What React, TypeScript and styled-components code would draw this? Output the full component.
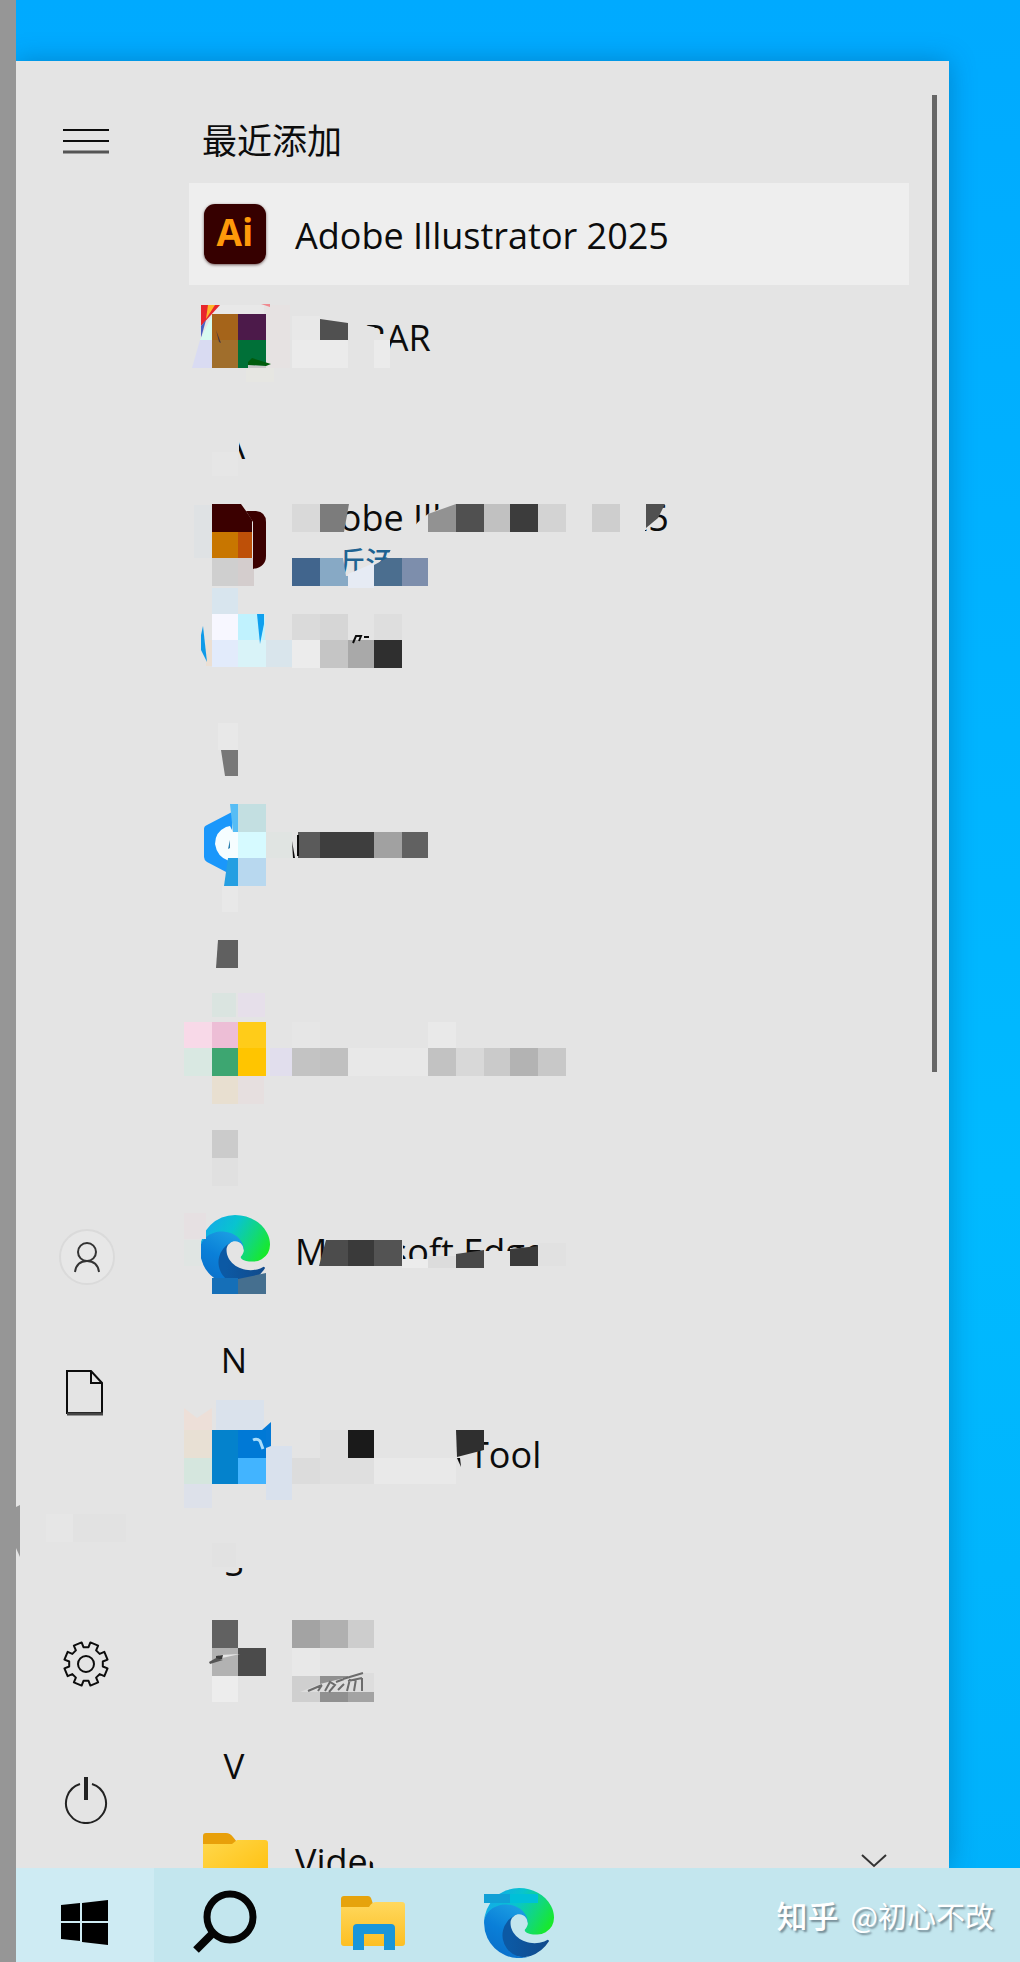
import React from "react";
import styled, { createGlobalStyle } from "styled-components";

const SURFACE = "#e4e4e4";
const INK = "#0c0c0c";

const GlobalStyle = createGlobalStyle`
  *, *::before, *::after { box-sizing: border-box; }
  body {
    margin: 0;
    color: ${INK};
    font-family: "Open Sans", "Noto Sans", "Noto Sans CJK SC", sans-serif;
  }
  svg { display: block; flex: none; }
`;

const Screen = styled.div`
  display: flex;
  background: linear-gradient(#00aaff, #00baff 60%, #00b0fb);
`;

const Edge = styled.div`
  position: relative;
  z-index: 1;
  flex: none;
  width: 16px;
  background: #969696;
`;

const Desktop = styled.div`
  flex: 1;
  min-width: 0;
  display: flex;
  flex-direction: column;
  padding-top: 61px;
`;

const StartMenu = styled.main`
  display: flex;
  margin-right: 71px;
  background: ${SURFACE};
  box-shadow: 0 0 24px rgba(0, 60, 110, 0.35);
`;

const Rail = styled.nav`
  position: relative;
  flex: none;
  width: 173px;
  padding: 12px 33px 0 0;
  display: flex;
  flex-direction: column;
  justify-content: space-between;
`;

const RailGroup = styled.div`
  display: flex;
  flex-direction: column;
`;

const RailButton = styled.button`
  display: flex;
  align-items: center;
  justify-content: center;
  height: 136px;
  padding: 0;
  border: 0;
  background: transparent;
  color: ${INK};
`;

const Notch = styled.svg`
  position: absolute;
  left: 0;
  bottom: 311px;
`;

const List = styled.section`
  flex: 1;
  min-width: 0;
`;

const Heading = styled.h2`
  margin: 0;
  height: 122px;
  padding: 53px 0 0 13px;
  font: 400 35px/50px "Noto Sans CJK SC", sans-serif;
`;

const Rows = styled.div`
  position: relative;
`;

const AppRow = styled.button<{ $active?: boolean; $cut?: boolean }>`
  display: flex;
  align-items: ${(p) => (p.$cut ? "flex-start" : "center")};
  gap: 26px;
  width: 100%;
  height: ${(p) => (p.$cut ? 60 : 102)}px;
  padding: ${(p) => (p.$cut ? "24px" : "0")} 12px 0;
  overflow: hidden;
  border: 0;
  background: ${(p) => (p.$active ? "#eeeeee" : "transparent")};
  color: inherit;
  font-family: inherit;
  text-align: left;
`;

const IconSlot = styled.span`
  flex: none;
  display: flex;
  align-items: center;
  justify-content: center;
  width: 68px;
`;

const Label = styled.span<{ $indent?: number; $cut?: boolean }>`
  flex: 1;
  padding-top: ${(p) => (p.$cut ? 8 : 4)}px;
  padding-left: ${(p) => p.$indent ?? 0}px;
  font-size: 36px;
  line-height: 44px;
  white-space: nowrap;
`;

const Sub = styled.span`
  display: block;
  color: #1f6391;
  font: 35px/46px "Noto Sans CJK SC", sans-serif;
`;

const LetterRow = styled.button`
  display: block;
  width: 100%;
  height: 101px;
  padding: 16px 28px 0;
  border: 0;
  background: transparent;
  color: inherit;
  font: 400 35px/44px "Open Sans", sans-serif;
  text-align: left;
`;

const Letter = styled.span`
  display: block;
  width: 34px;
  text-align: center;
`;

const MosaicLayer = styled.svg`
  position: absolute;
  left: 0;
  top: 0;
  width: 720px;
  height: 1685px;
  overflow: visible;
  pointer-events: none;
`;

const Gutter = styled.div`
  flex: none;
  width: 40px;
  padding: 34px 12px 0 23px;
`;

const Thumb = styled.div`
  height: 977px;
  background: #666666;
`;

const Taskbar = styled.footer`
  position: relative;
  display: flex;
  align-items: stretch;
  height: 94px;
  background: #c3e6ee;
`;

const TaskButton = styled.button<{ $start?: boolean }>`
  flex: none;
  display: flex;
  align-items: center;
  justify-content: center;
  width: ${(p) => (p.$start ? 138 : 146)}px;
  padding: 16px 0 0;
  border: 0;
  background: ${(p) => (p.$start ? "#ceebf3" : "transparent")};
`;

const Credit = styled.p`
  display: flex;
  align-items: center;
  gap: 12px;
  margin: 0 26px 0 auto;
  color: #ffffff;
  font: 400 29px/40px "Noto Sans CJK SC", sans-serif;
  text-shadow: 2px 2px 2px rgba(90, 110, 120, 0.75);
`;

const Site = styled.strong`
  font-size: 31px;
  font-weight: 500;
`;

function EdgeLogo({ id, size }: { id: string; size: number }) {
  return (
    <svg width={size} height={size} viewBox="0 0 256 256" aria-hidden="true">
      <defs>
        <linearGradient id={id + "a"} x1="0.2" x2="1" y1="0.6" y2="0.6">
          <stop offset="0" stopColor="#0c59a4" />
          <stop offset="1" stopColor="#114a8b" />
        </linearGradient>
        <linearGradient id={id + "b"} x1="0.7" x2="0.3" y1="0.1" y2="1">
          <stop offset="0" stopColor="#1b9de2" />
          <stop offset="0.5" stopColor="#0a7fd8" />
          <stop offset="1" stopColor="#0a6fc9" />
        </linearGradient>
        <linearGradient id={id + "c"} x1="0" x2="1" y1="0.3" y2="0.7">
          <stop offset="0" stopColor="#14a8ea" />
          <stop offset="0.4" stopColor="#08c4cf" />
          <stop offset="0.72" stopColor="#12d87a" />
          <stop offset="1" stopColor="#18ea28" />
        </linearGradient>
      </defs>
      <path fill={`url(#${id}a)`} d="M231 190.5c-3.4 1.8-6.9 3.4-10.5 4.7a101.5 101.5 0 0 1-35.6 6.4c-47 0-87.9-32.3-87.9-73.8a31.5 31.5 0 0 1 16.4-27.3c-42.5 1.8-53.4 46.1-53.4 72 0 73.5 67.6 80.9 82.2 80.9 7.9 0 19.7-2.3 26.8-4.6l1.3-.4a128.3 128.3 0 0 0 66.6-52.8 4 4 0 0 0-5.9-5.1z" />
      <path fill={`url(#${id}b)`} d="M105.7 241.5a79.2 79.2 0 0 1-22.7-21.3 80.7 80.7 0 0 1 29.6-119.9c3.1-1.5 8.5-4.1 15.6-4a32.4 32.4 0 0 1 25.7 13 31.9 31.9 0 0 1 6.3 18.7c0-.2 24.5-79.6-80-79.6-43.9 0-80 41.7-80 78.2a130.2 130.2 0 0 0 12.1 56 128 128 0 0 0 156.4 67.1 75.5 75.5 0 0 1-63-8.2z" />
      <path fill={`url(#${id}c)`} d="M152.3 148.9c-.9 1-3.4 2.5-3.4 5.6 0 2.6 1.7 5.1 4.7 7.2 14.4 10 41.5 8.7 41.6 8.7a59.6 59.6 0 0 0 30.3-8.4 61.4 61.4 0 0 0 30.5-52.9c.3-22.4-8-37.3-11.3-43.9C223.4 23.9 177.4 0 128.2 0a128 128 0 0 0-128 126.2c.5-36.5 36.8-66 80-66 3.5 0 23.5.3 42 10.1 16.3 8.6 24.9 18.9 30.8 29.2 6.2 10.7 7.3 24.1 7.3 29.5 0 5.3-2.7 13.3-8 19.9z" />
    </svg>
  );
}

const AiTile = styled.span`
  display: flex;
  align-items: center;
  justify-content: center;
  width: 62px;
  height: 60px;
  padding-bottom: 4px;
  border-radius: 11px;
  background: #360000;
  box-shadow: 0 1px 3px rgba(60, 30, 30, 0.7);
  color: #ff9a0a;
  font: 700 37px/44px "Open Sans", sans-serif;
`;

function FolderIcon() {
  return (
    <svg width="66" height="52" viewBox="0 0 66 52" aria-hidden="true">
      <defs>
        <linearGradient id="folder" x1="0" y1="0" x2="1" y2="1">
          <stop offset="0" stopColor="#ffd84c" />
          <stop offset="1" stopColor="#ffbe0a" />
        </linearGradient>
      </defs>
      <path d="M1 4q0-3 3-3h20q4 0 7 4l4 5-4 8H1z" fill="#e8a00a" />
      <path d="M1 12h29l5-4h28q3 0 3 3v41H1z" fill="url(#folder)" />
    </svg>
  );
}

const gearPoints = Array.from({ length: 8 }, (_, i) => {
  const at = (deg: number, r: number) => {
    const a = ((22.5 + 45 * i + deg) * Math.PI) / 180;
    return `${24 + r * Math.cos(a)},${24 + r * Math.sin(a)}`;
  };
  return [at(-14, 17), at(-11, 22), at(11, 22), at(14, 17)].join(" ");
}).join(" ");

/* Pixelated cells: x, y, width, height, fill */
const cells: [number, number, number, number, string][] = [
  // WinRAR row
  [266, 305, 24, 63, "#e6e2e2"],
  [212, 305, 52, 9, "#e8e8e8"],
  [212, 314, 26, 26, "#a5641a"],
  [212, 340, 26, 28, "#a06e2c"],
  [238, 314, 28, 26, "#4c1a4a"],
  [238, 340, 28, 28, "#007038"],
  [246, 368, 28, 14, "#e6e6e2"],
  [292, 313, 74, 55, SURFACE],
  [292, 316, 28, 24, "#e8e8e8"],
  [292, 340, 56, 28, "#ebebeb"],
  [366, 334, 21, 34, SURFACE],
  [374, 340, 16, 28, "#ebebeb"],
  // A
  [212, 426, 27, 46, SURFACE],
  [212, 452, 26, 24, "#e6e6e6"],
  // Adobe Illustrator row
  [194, 505, 18, 53, "#dfe2e4"],
  [212, 532, 26, 26, "#c87600"],
  [238, 532, 14, 26, "#be5008"],
  [212, 558, 26, 28, "#cfcfcf"],
  [238, 558, 16, 28, "#d4cdcd"],
  [292, 500, 52, 36, SURFACE],
  [292, 504, 28, 28, "#d9d9d9"],
  [444, 498, 201, 38, SURFACE],
  [456, 504, 28, 28, "#505050"],
  [484, 504, 26, 28, "#c1c1c1"],
  [510, 504, 28, 28, "#3c3c3c"],
  [538, 504, 28, 28, "#d3d3d3"],
  [592, 504, 28, 28, "#cecece"],
  [292, 538, 50, 50, SURFACE],
  [398, 538, 42, 50, SURFACE],
  [292, 558, 28, 28, "#41658d"],
  [402, 558, 26, 28, "#7d8eac"],
  // second A entry
  [212, 588, 26, 26, "#d8e5ee"],
  [212, 614, 26, 26, "#f7f7ff"],
  [238, 614, 27, 26, "#c0f2fe"],
  [206, 640, 6, 26, "#ebdfd3"],
  [212, 640, 26, 27, "#e2ebfb"],
  [238, 640, 28, 27, "#d9f3f8"],
  [266, 640, 26, 27, "#d9e5ec"],
  [292, 614, 28, 26, "#dadada"],
  [320, 614, 28, 26, "#d6d6d6"],
  [374, 614, 28, 26, "#dedede"],
  [292, 640, 28, 28, "#ececec"],
  [320, 640, 28, 28, "#c5c5c5"],
  [348, 640, 26, 28, "#a9a9a9"],
  [374, 640, 28, 28, "#2f2f2f"],
  // hexagon entry
  [218, 723, 20, 27, "#e8e8e8"],
  [238, 804, 28, 28, "#c3dfe1"],
  [266, 832, 26, 26, "#e0e4e2"],
  [238, 858, 28, 28, "#b8d8ef"],
  [298, 832, 22, 26, "#5a5a5a"],
  [320, 832, 54, 26, "#3e3e3e"],
  [374, 832, 28, 26, "#a1a1a1"],
  [402, 832, 26, 26, "#616161"],
  [222, 886, 16, 26, "#e8e8e8"],
  // four-colour entry
  [212, 993, 24, 24, "#dae4e0"],
  [238, 993, 27, 24, "#e6dfea"],
  [184, 1022, 28, 26, "#f8d9e8"],
  [212, 1022, 26, 26, "#edbed6"],
  [238, 1022, 28, 26, "#ffcc19"],
  [184, 1048, 28, 28, "#d9e8e2"],
  [212, 1048, 26, 28, "#3da671"],
  [238, 1048, 28, 28, "#ffc500"],
  [270, 1048, 22, 28, "#e1deed"],
  [212, 1076, 26, 28, "#e8dfd0"],
  [238, 1076, 26, 28, "#e6dfdf"],
  [292, 1022, 28, 26, "#e6e6e6"],
  [292, 1048, 28, 28, "#c3c3c3"],
  [320, 1048, 28, 28, "#c0c0c0"],
  [348, 1048, 80, 28, "#e8e8e8"],
  [428, 1022, 28, 26, "#e9e9e9"],
  [428, 1048, 28, 28, "#c2c2c2"],
  [456, 1048, 28, 28, "#d8d8d8"],
  [484, 1048, 26, 28, "#cacaca"],
  [510, 1048, 28, 28, "#b3b3b3"],
  [538, 1048, 28, 28, "#c8c8c8"],
  [212, 1130, 26, 28, "#cbcbcb"],
  [212, 1158, 26, 28, "#e0e0e0"],
  // Microsoft Edge row
  [184, 1213, 22, 26, "#e6e0e2"],
  [184, 1240, 17, 26, "#e0e5e3"],
  [200, 1279, 72, 14, SURFACE],
  [212, 1278, 26, 16, "#156fb8"],
  [327, 1228, 76, 40, SURFACE],
  [348, 1240, 26, 26, "#3a3a3a"],
  [374, 1240, 28, 26, "#535353"],
  [402, 1259, 26, 9, "#ececec"],
  [428, 1256, 28, 12, "#dcdcdc"],
  [484, 1251, 26, 24, SURFACE],
  [510, 1248, 60, 32, SURFACE],
  [538, 1238, 30, 34, SURFACE],
  [538, 1243, 28, 23, "#e1e1e1"],
  // N entry
  [216, 1400, 48, 30, "#dae2ec"],
  [184, 1430, 28, 28, "#e8e0d4"],
  [184, 1458, 28, 26, "#d5e6de"],
  [184, 1484, 28, 24, "#dde1ea"],
  [266, 1446, 26, 54, "#d9e1ed"],
  [212, 1430, 26, 54, "#0482cc"],
  [238, 1430, 28, 28, "#0079d6"],
  [238, 1458, 28, 26, "#42b4ff"],
  [292, 1458, 28, 26, "#dcdcdc"],
  [320, 1430, 28, 54, "#dfdfdf"],
  [348, 1430, 26, 28, "#1a1a1a"],
  [348, 1458, 26, 26, "#dfdfdf"],
  [374, 1458, 82, 26, "#e9e9e9"],
  // S entry
  [212, 1543, 40, 25, SURFACE],
  [212, 1543, 24, 24, "#e2e2e2"],
  [212, 1620, 26, 28, "#616161"],
  [212, 1648, 26, 28, "#b2b2b2"],
  [238, 1648, 28, 28, "#4b4b4b"],
  [212, 1676, 26, 26, "#ededed"],
  [292, 1620, 28, 28, "#a3a3a3"],
  [320, 1620, 28, 28, "#b0b0b0"],
  [348, 1620, 26, 28, "#cdcdcd"],
  [292, 1648, 28, 28, "#e8e8e8"],
  [292, 1676, 28, 26, "#cfcfcf"],
  [320, 1676, 28, 26, "#909090"],
  [348, 1692, 26, 10, "#a3a3a3"],
];

/* Cells with a slanted side: polygon points, fill */
const shards: [string, string][] = [
  ["201,305 220,305 201,326", "#e8262c"],
  ["208,305 215,305 206,319", "#ffb62a"],
  ["201,326 206,320 201,338", "#4a5fc0"],
  ["212,315 212,340 200,340", "#d8fbf0"],
  ["200,340 212,340 212,368 192,368", "#d9dbf2"],
  ["216,330 221,343 219,342", "#4a3a40"],
  ["248,362 252,358 271,364 266,366 248,365", "#005c0c"],
  ["248,365 266,366 266,368 248,368", "#c8c8c8"],
  ["261,304 270,304 270,307", "#f08a90"],
  ["320,319 348,323 348,340 320,340", "#505050"],
  ["364,313 364,325 374,327 380,334 364,338", SURFACE],
  ["212,504 241,504 246,511 252,520 252,532 212,532", "#3b0000"],
  ["320,504 349,504 344,532 320,532", "#7c7c7c"],
  ["410,532 418,522 428,514 446,506 446,536 410,536", SURFACE],
  ["428,514 456,504 456,532 428,532", "#929292"],
  ["644,502 650,502 657,516 646,530 644,530", SURFACE],
  ["646,504 665,504 658,518 646,528", "#505050"],
  ["348,574 374,563 374,588 348,588", "#e6ebf4"],
  ["320,558 343,558 346,576 348,576 348,586 320,586", "#87a9c5"],
  ["374,565 402,550 402,558 402,586 374,586", "#4b6e8f"],
  ["396,538 440,538 440,558 387,558", SURFACE],
  ["203,626 207,662 201,650 201,635", "#0f9ae8"],
  ["257,614 264,614 264,624 260,644", "#10a0ee"],
  ["221,750 238,750 238,776 225,776", "#787878"],
  ["230,804 238,804 238,832 233,832", "#57bdf5"],
  ["228,858 238,858 238,886 224,886", "#259fe2"],
  ["292,841 295,858 293,858", INK],
  ["218,940 238,940 238,968 216,968", "#606060"],
  ["238,1279 266,1273 266,1294 238,1294", "#456f8f"],
  ["326,1240 348,1240 348,1266 319,1266", "#4c4c4c"],
  ["456,1254 484,1250 484,1268 456,1268", "#484848"],
  ["510,1249 538,1246 538,1266 510,1266", "#3a3a3a"],
  ["184,1408 197,1418 212,1408 212,1430 184,1430", "#eddfd8"],
  ["262,1430 271,1422 271,1446 266,1448 266,1430", "#0479d6"],
  ["456,1430 484,1430 484,1450 457,1457", "#2f2f2f"],
  ["457,1458 460,1458 461,1467", INK],
  ["210,1663 220,1655 240,1654 222,1658 210,1664", "#e6e6e6"],
  ["216,1656 223,1655 222,1659 216,1660", "#3a3a3a"],
  ["209,1662 216,1658 223,1660 210,1664", "#555555"],
  ["300,1692 320,1684 364,1673 374,1673 374,1692", "#dddddd"],
  ["364,1840 364,1856 372,1862 377,1868 420,1868 420,1840", SURFACE],
];

function Mosaic() {
  return (
    <MosaicLayer viewBox="189 183 720 1685" aria-hidden="true">
      {cells.map(([x, y, w, h, fill], i) => (
        <rect key={i} x={x} y={y} width={w} height={h} fill={fill} shapeRendering="crispEdges" />
      ))}
      <path d="M246 511h10q10 1 10 11v34q0 11-13 13V522z" fill="#3b0000" />
      <path d="M248 522l4 2v5l-4-3z" fill="#c87600" />
      <path d="M204 829q0-3 3-4l25-13v24l4 22-8 15-21-11q-3-2-3-5z" fill="#1a97fb" />
      <path d="M226 827q-11 5-11 17 2 13 14 17h9v-29h-5l-3-6z" fill="#f6fdff" />
      <path d="M230 840v8l-2 1z" fill="#2c7fae" />
      <rect x="238" y="832" width="28" height="26" fill="#d6faff" />
      {shards.map(([points, fill], i) => (
        <polygon key={i} points={points} fill={fill} />
      ))}
      <rect x="297" y="835" width="2" height="21" fill={INK} />
      <path d="M353 643l3-7h5l-2 5M364 637h5" stroke={INK} strokeWidth="2" fill="none" />
      <path d="M253 1440q4-2 7 1l3 8" stroke="#a9dcfa" strokeWidth="3" fill="none" />
      <path d="M308 1691l14-6M318 1691l4-6M325 1691l5-9 5 3-6 7M336 1682l8-3M338 1690l6-6M347 1691l3-12M354 1691l2-12M348 1681l14-3M362 1678v13M343 1679l20-6" stroke="#6c6c6c" strokeWidth="2" fill="none" />
      <path d="M862 1855l12 11 12-11" stroke="#333333" strokeWidth="2" fill="none" />
    </MosaicLayer>
  );
}

const LogoStrip = styled.svg`
  position: absolute;
  left: 468px;
  top: 26px;
`;

export default function App() {
  return (
    <>
      <GlobalStyle />
      <Screen>
        <Edge />
        <Desktop>
          <StartMenu>
            <Rail>
              <RailButton aria-label="展开">
                <svg width="46" height="28" viewBox="0 0 46 28" stroke={INK} strokeWidth="2" aria-hidden="true">
                  <path d="M0 3h46M0 14h46" />
                  <path d="M0 25h46" stroke="#555555" strokeWidth="3" />
                </svg>
              </RailButton>
              <RailGroup>
                <RailButton aria-label="帐户">
                  <svg width="58" height="58" viewBox="0 0 58 58" fill="none" stroke="#333333" strokeWidth="2" aria-hidden="true">
                    <circle cx="30" cy="30" r="27" fill="#e7e7e7" stroke="#dadada" />
                    <circle cx="30" cy="25" r="9" />
                    <path d="M18 45c1-7 5-11 12-11s11 4 12 11" />
                  </svg>
                </RailButton>
                <RailButton aria-label="文档">
                  <svg width="42" height="48" viewBox="0 0 42 48" fill="none" stroke={INK} strokeWidth="2" aria-hidden="true">
                    <path d="M2 3h24l11 12v30H2zM26 3v12h11" />
                    <path d="M2 46h36" stroke="#444444" strokeWidth="3" />
                  </svg>
                </RailButton>
                <RailButton aria-label="图片">
                  <svg width="80" height="28" viewBox="0 0 80 28" aria-hidden="true">
                    <rect width="27" height="28" fill="#e6e6e6" />
                    <rect x="27" width="53" height="28" fill="#e2e2e2" />
                  </svg>
                </RailButton>
                <RailButton aria-label="设置">
                  <svg width="48" height="48" viewBox="0 0 48 48" fill="none" stroke={INK} strokeWidth="2" aria-hidden="true">
                    <polygon points={gearPoints} strokeLinejoin="round" />
                    <circle cx="24" cy="24" r="8" />
                  </svg>
                </RailButton>
                <RailButton aria-label="电源">
                  <svg width="44" height="48" viewBox="0 0 44 48" fill="none" stroke="#222222" aria-hidden="true">
                    <path d="M16 8a20 20 0 1 0 12 0" strokeWidth="2" />
                    <path d="M22 1v23" strokeWidth="4" />
                  </svg>
                </RailButton>
              </RailGroup>
              <Notch width="4" height="52" viewBox="0 0 4 52" aria-hidden="true">
                <path d="M0 2l4-2v52l-4-9z" fill="#969696" />
              </Notch>
            </Rail>
            <List>
              <Heading>最近添加</Heading>
              <Rows>
                <AppRow $active>
                  <IconSlot><AiTile>Ai</AiTile></IconSlot>
                  <Label>Adobe Illustrator 2025</Label>
                </AppRow>
                <AppRow>
                  <IconSlot />
                  <Label $indent={4}>WinRAR</Label>
                </AppRow>
                <LetterRow><Letter>A</Letter></LetterRow>
                <AppRow>
                  <IconSlot />
                  <Label>Adobe Illustrator 2025<Sub>最近添加</Sub></Label>
                </AppRow>
                <AppRow aria-label="A" />
                <LetterRow aria-label="B" />
                <AppRow aria-label="B" />
                <LetterRow aria-label="F" />
                <AppRow aria-label="G" />
                <LetterRow aria-label="M" />
                <AppRow>
                  <IconSlot><EdgeLogo id="menu" size={70} /></IconSlot>
                  <Label>Microsoft Edge</Label>
                </AppRow>
                <LetterRow><Letter>N</Letter></LetterRow>
                <AppRow>
                  <IconSlot />
                  <Label $indent={174}>Tool</Label>
                </AppRow>
                <LetterRow><Letter>S</Letter></LetterRow>
                <AppRow aria-label="S" />
                <LetterRow><Letter>V</Letter></LetterRow>
                <AppRow $cut>
                  <IconSlot><FolderIcon /></IconSlot>
                  <Label $cut>Videos</Label>
                </AppRow>
                <Mosaic />
              </Rows>
            </List>
            <Gutter><Thumb /></Gutter>
          </StartMenu>
          <Taskbar>
            <TaskButton $start aria-label="开始">
              <svg width="48" height="46" viewBox="0 0 48 46" aria-hidden="true">
                <path d="M0 5l19-2v18H0zM21 3l26-3v21H21zM0 23h19v18L0 39zM21 23h26v22l-26-3z" fill="#000000" />
              </svg>
            </TaskButton>
            <TaskButton aria-label="搜索">
              <svg width="68" height="66" viewBox="0 0 68 66" fill="none" stroke="#050505" aria-hidden="true">
                <circle cx="37" cy="27" r="23" strokeWidth="7" />
                <path d="M20 43L3 60" strokeWidth="8" />
              </svg>
            </TaskButton>
            <TaskButton aria-label="文件资源管理器">
              <svg width="64" height="54" viewBox="0 0 64 54" aria-hidden="true">
                <defs>
                  <linearGradient id="files" x1="0" y1="0" x2="0" y2="1">
                    <stop offset="0" stopColor="#ffd85e" />
                    <stop offset="1" stopColor="#fdbf22" />
                  </linearGradient>
                </defs>
                <path d="M0 3q0-3 3-3h24q2 0 3 2l2 6-5 8H0z" fill="#e6a30c" />
                <path d="M0 11h28q3-5 7-5h26q3 0 3 3v38q0 3-3 3H3q-3 0-3-3z" fill="url(#files)" />
                <path d="M12 54V32q0-4 4-4h34q4 0 4 4v22H43V38H23v16z" fill="#1a96da" />
              </svg>
            </TaskButton>
            <TaskButton aria-label="Microsoft Edge">
              <EdgeLogo id="task" size={70} />
            </TaskButton>
            <LogoStrip width="54" height="9" viewBox="0 0 54 9" aria-hidden="true">
              <rect y="-6" width="54" height="6" fill="#c3e6ee" />
              <rect width="26" height="9" fill="#11a0d6" />
              <rect x="26" width="28" height="9" fill="#00c0d8" />
            </LogoStrip>
            <Credit><Site>知乎</Site>@初心不改</Credit>
          </Taskbar>
        </Desktop>
      </Screen>
    </>
  );
}
